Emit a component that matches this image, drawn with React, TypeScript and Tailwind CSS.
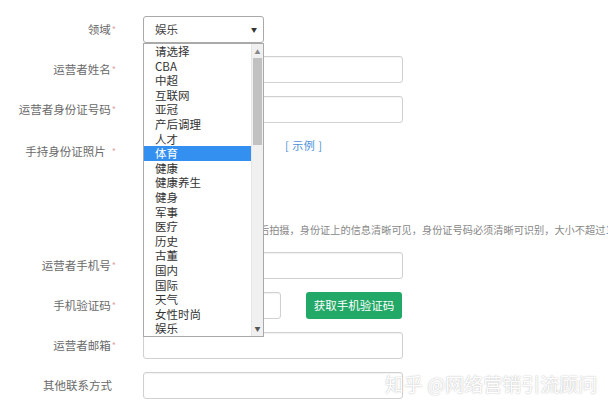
import React from "react";

const font = "font-['Microsoft_YaHei','Noto_Sans_CJK_SC',sans-serif]";

const options = [
  "请选择", "CBA", "中超", "互联网", "亚冠", "产后调理", "人才", "体育", "健康", "健康养生",
  "健身", "军事", "医疗", "历史", "古董", "国内", "国际", "天气", "女性时尚", "娱乐",
];

function Label({ text, star = true, gap = false }: { text: string; star?: boolean; gap?: boolean }) {
  return (
    <div className="w-[116px] shrink-0 h-[27px] flex items-center justify-end text-[11.5px] text-[#6a6a6a]">
      <span>{text}</span>
      {star && <span className={`text-[9px] text-[#e3a5a5] ${gap ? "ml-[6px]" : "ml-[1px]"}`}>*</span>}
      {!star && <span className="w-[4px]" />}
    </div>
  );
}

function Input({ w = "w-[260px]" }: { w?: string }) {
  return <div className={`${w} h-[27px] rounded-[3px] border border-[#d0d0d0] bg-white shadow-[inset_0_1px_1px_rgba(0,0,0,0.05)]`} />;
}

function Dropdown() {
  return (
    <div className="absolute left-0 top-[27px] w-[121px] border border-[#a9a9a9] bg-white flex z-10">
      <div className="flex-1">
        {options.map((o) => (
          <div
            key={o}
            className={`h-[14.6px] leading-[14.6px] pl-[11px] text-[11.5px] ${o === "体育" ? "bg-[#3390f0] text-white" : "text-[#333]"}`}
          >
            {o}
          </div>
        ))}
      </div>
      <div className="w-[12px] bg-[#f0f0f0] flex flex-col border-l border-[#e6e6e6]">
        <div className="h-[14px] flex items-center justify-center text-[6px] text-[#888]">▲</div>
        <div className="h-[87px] mx-[1px] bg-[#c1c1c1]" />
        <div className="flex-1" />
        <div className="h-[14px] flex items-center justify-center text-[6px] text-[#555]">▼</div>
      </div>
    </div>
  );
}

export default function App() {
  return (
    <div className={`w-[608px] h-[407px] bg-white overflow-hidden relative ${font}`}>
      <div className="pt-[16px] flex flex-col gap-[13px]">
        {/* 领域 */}
        <div className="flex gap-[27px]">
          <Label text="领域" />
          <div className="relative">
            <div className="w-[121px] h-[27px] rounded-[3px] border border-[#a9a9a9] bg-white flex items-center justify-between pl-[11px] pr-[6px] text-[11.5px] text-[#444]">
              <span>娱乐</span>
              <span className="text-[6px] text-[#333]">▼</span>
            </div>
            <Dropdown />
          </div>
        </div>

        <div className="flex gap-[27px]">
          <Label text="运营者姓名" />
          <Input />
        </div>

        <div className="flex gap-[27px]">
          <Label text="运营者身份证号码" />
          <Input />
        </div>

        {/* 手持身份证照片 */}
        <div className="flex gap-[27px]">
          <div className="pt-[2px]">
            <Label text="手持身份证照片" gap />
          </div>
          <div className="flex flex-col">
            <div className="flex">
              <div className="w-[134px] h-[82px]" />
              <span className="ml-[8px] mt-[1px] text-[11px] text-[#4a90d9] tracking-[0.5px]">[ 示例 ]</span>
            </div>
            <div className="mt-[4px] pl-[116px] h-[16px] leading-[16px] whitespace-nowrap text-[10.2px] text-[#888]">
              后拍摄，身份证上的信息清晰可见，身份证号码必须清晰可识别，大小不超过<span className="text-[#3b8fd6]">10M</span>
            </div>
          </div>
        </div>

        <div className="flex gap-[27px] mt-[1px]">
          <Label text="运营者手机号" />
          <Input />
        </div>

        <div className="flex gap-[27px]">
          <Label text="手机验证码" />
          <Input w="w-[138px]" />
          <button className="ml-[-2px] w-[96px] h-[27px] rounded-[3px] bg-[#22a867] text-white text-[11.5px]">
            获取手机验证码
          </button>
        </div>

        <div className="flex gap-[27px]">
          <Label text="运营者邮箱" />
          <Input />
        </div>

        <div className="flex gap-[27px]">
          <Label text="其他联系方式" star={false} />
          <Input />
        </div>
      </div>

      <div className="absolute left-[385px] top-[370px] text-[19px] text-white [text-shadow:0_0_1.5px_rgba(0,0,0,0.35)] whitespace-nowrap">
        知乎 @网络营销引流顾问
      </div>
    </div>
  );
}
